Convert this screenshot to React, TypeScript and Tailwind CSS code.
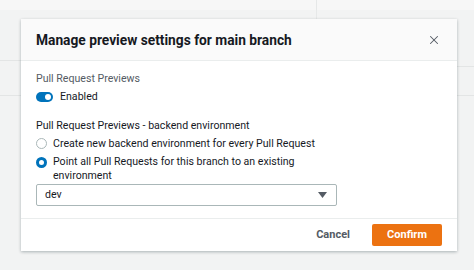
import { X } from 'lucide-react';

function Radio({ checked }: { checked?: boolean }) {
  return checked ? (
    <span className="mt-[2px] h-[11px] w-[11px] shrink-0 rounded-full border-[3px] border-[#0073bb] bg-white" />
  ) : (
    <span className="mt-[2px] h-[11px] w-[11px] shrink-0 rounded-full border border-[#aab7b8] bg-white" />
  );
}

export default function App() {
  return (
    <div
      className="relative h-[270px] w-[474px] overflow-hidden bg-[#f2f3f3] pl-[21px] pt-[19px] text-[#16191f]"
      style={{ fontFamily: 'Roboto, Lato, Arial, sans-serif' }}
    >
      {/* page behind the modal */}
      <div className="absolute left-0 right-0 top-0 h-[10px] bg-[#f7f7f7]" />
      <div className="absolute left-0 top-[60px] h-px w-[21px] bg-[#e3e5e5]" />
      <div className="absolute left-0 top-[95px] h-px w-[21px] bg-[#e3e5e5]" />
      <div className="absolute right-0 top-[66px] h-px w-[17px] bg-[#e3e5e5]" />
      <div className="absolute right-0 top-[95px] h-px w-[17px] bg-[#e3e5e5]" />
      <div className="absolute left-[316px] top-0 h-[19px] w-px bg-[#e6e8e8]" />

      <div className="relative flex h-[232px] w-[436px] flex-col bg-white shadow-[0_1px_3px_rgba(0,28,36,0.3)]">
        <div className="flex h-[42px] items-center justify-between border-b border-[#eaeded] bg-[#fafafa] pl-[15px] pr-[16px]">
          <span className="text-[13.75px] font-bold leading-[20px]">Manage preview settings for main branch</span>
          <X className="h-[14px] w-[14px] text-[#545b64]" strokeWidth={1.75} />
        </div>

        <div className="flex flex-1 flex-col pl-[15px] pr-[15px] pt-[10px] text-[10.6px] leading-[16px]">
          <div className="text-[#545b64]">Pull Request Previews</div>
          <div className="mt-[2px] flex h-[16px] items-center gap-[7px]">
            <span className="flex h-[10px] w-[17px] items-center justify-end rounded-full bg-[#0073bb] pr-[2px]">
              <span className="h-[6px] w-[6px] rounded-full bg-white" />
            </span>
            <span>Enabled</span>
          </div>

          <div className="mt-[13px]">Pull Request Previews - backend environment</div>
          <div className="mt-[2px] flex gap-[6px]">
            <Radio />
            <span>Create new backend environment for every Pull Request</span>
          </div>
          <div className="mt-[3px] flex gap-[6px] leading-[14px]">
            <Radio checked />
            <span className="w-[260px]">Point all Pull Requests for this branch to an existing environment</span>
          </div>
          <div className="mt-[1px] flex h-[22px] w-[301px] items-center justify-between rounded-[2px] border border-[#aab7b8] pl-[8px] pr-[9px]">
            <span>dev</span>
            <svg width="9" height="6" viewBox="0 0 9 6">
              <path d="M0 0h9L4.5 6z" fill="#545b64" />
            </svg>
          </div>
        </div>

        <div className="flex h-[33px] items-center justify-end gap-[22px] border-t border-[#eaeded] pr-[15px] text-[11px] font-bold">
          <span className="text-[#545b64]">Cancel</span>
          <span className="flex h-[22px] w-[70px] items-center justify-center rounded-[2px] bg-[#ec7211] text-white">
            Confirm
          </span>
        </div>
      </div>
    </div>
  );
}
